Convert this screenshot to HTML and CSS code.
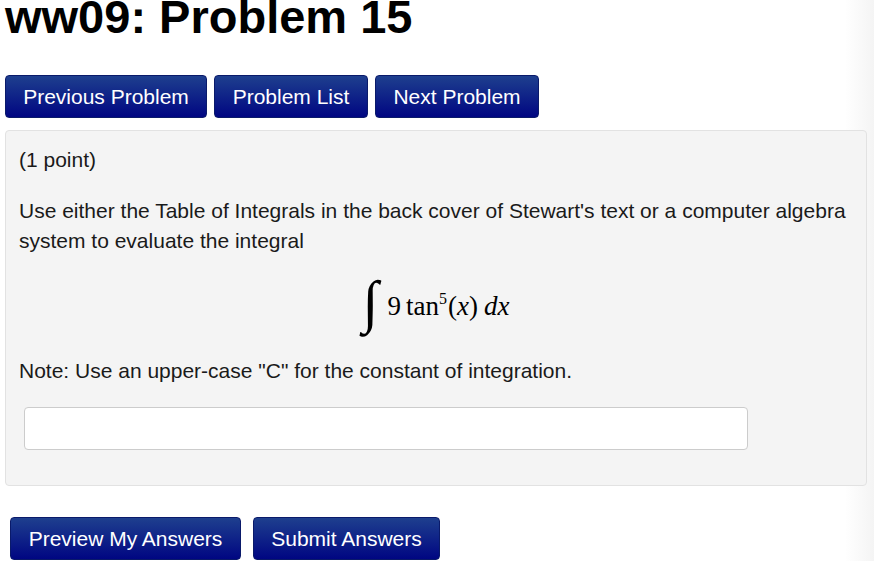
FILE: index.html
```html
<!DOCTYPE html>
<html lang="en">
<head>
    <meta charset="UTF-8">
    <title>ww09: Problem 15</title>
    <link rel="stylesheet" href="styles.css">
</head>
<body>
    <div class="page">
        <h1 class="title">ww09: Problem 15</h1>

        <!-- navigation -->
        <div class="nav">
            <a class="btn btn-prev">Previous Problem</a>
            <a class="btn btn-list">Problem List</a>
            <a class="btn btn-next">Next Problem</a>
        </div>

        <div class="problem">
            <p class="points">(1 point)</p>
            <p class="text">Use either the Table of Integrals in the back cover of Stewart's text or a computer algebra system to evaluate the integral</p>
            <div class="math">
                <span class="int">&#8747;</span>
                <span class="expr">9<span class="op">tan</span><sup>5</sup>(<i>x</i>)<i class="d">dx</i></span>
            </div>
            <p class="text">Note: Use an upper-case "C" for the constant of integration.</p>
            <input type="text" class="answer">
        </div>

        <div class="submit-row">
            <a class="btn btn-preview">Preview My Answers</a>
            <a class="btn btn-submit">Submit Answers</a>
        </div>
    </div>
</body>
</html>
```

FILE: styles.css
```css
* {
    margin: 0;
    padding: 0;
    box-sizing: border-box;
}

body {
    font-family: "Liberation Sans", Arial, sans-serif;
    color: #1a1a1a;
    background: linear-gradient(to right, #fff 845px, #f4f4f4 874px);
    min-height: 561px;
    overflow: hidden;
}

.page {
    padding-left: 5px;
    width: 867px;
}

/* 标题 */
.title {
    font-size: 47px;
    line-height: 47px;
    font-weight: 700;
    color: #000;
    margin-top: -7px;
    margin-bottom: 35px;
}

/* 按钮 */
.btn {
    display: inline-block;
    font-size: 21px;
    line-height: 23px;
    padding: 9px 0;
    text-align: center;
    color: #fff;
    background: linear-gradient(to bottom, #1e3f8e, #000682);
    border: 1px solid #0a1a6a;
    border-radius: 4px;
    cursor: pointer;
}

.nav {
    display: flex;
    gap: 7px;
}

.btn-prev { width: 202px; }
.btn-list { width: 154px; }
.btn-next { width: 164px; }

/* 题目区域 */
.problem {
    margin-top: 12px;
    background: #f4f4f4;
    border: 1px solid #e2e2e2;
    border-radius: 4px;
    padding: 14px 13px 35px;
    font-size: 21px;
    line-height: 30px;
}

.points {
    margin-bottom: 21px;
}

.math {
    height: 100px;
    display: flex;
    align-items: center;
    justify-content: center;
    font-family: "Liberation Serif", "DejaVu Serif", serif;
    color: #000;
    padding-left: 0;
}

.int {
    font-size: 58px;
    line-height: 60px;
    margin-right: 9px;
    position: relative;
    top: -4px;
}

.expr {
    font-size: 27px;
}

.expr .op {
    margin-left: 5px;
}

.expr sup {
    font-size: 16px;
    vertical-align: 11px;
    line-height: 0;
    margin-right: 1px;
}

.expr .d {
    margin-left: 6px;
}

.answer {
    display: block;
    margin: 21px 0 0 5px;
    width: 724px;
    height: 43px;
    background: #fff;
    border: 1px solid #ccc;
    border-radius: 4px;
}

/* 提交按钮 */
.submit-row {
    display: flex;
    gap: 12px;
    margin: 31px 0 0 5px;
}

.btn-preview { width: 231px; }
.btn-submit { width: 187px; }
```
